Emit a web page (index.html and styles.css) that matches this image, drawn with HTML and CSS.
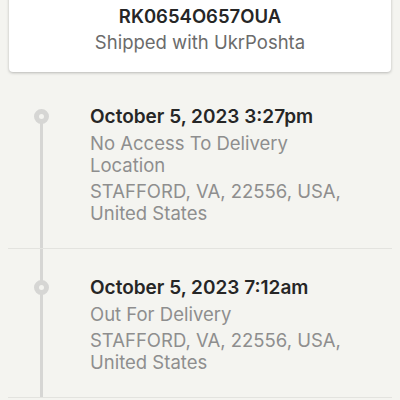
FILE: index.html
```html
<!DOCTYPE html>
<html lang="en">
<head>
    <meta charset="UTF-8">
    <meta name="viewport" content="width=device-width, initial-scale=1.0">
    <title>Tracking</title>
    <link rel="stylesheet" href="styles.css">
</head>
<body>
    <!-- 运单卡片 -->
    <div class="card">
        <p class="card_num">RK0654O657OUA</p>
        <p class="card_via">Shipped with UkrPoshta</p>
    </div>

    <!-- 物流记录 -->
    <ul class="track">
        <li class="first">
            <div class="rail"><span class="dot"></span></div>
            <div class="info">
                <p class="date">October 5, 2023 3:27pm</p>
                <p class="status">No Access To Delivery Location</p>
                <p class="place">STAFFORD, VA, 22556, USA, United States</p>
            </div>
        </li>
        <li>
            <div class="rail"><span class="dot"></span></div>
            <div class="info">
                <p class="date">October 5, 2023 7:12am</p>
                <p class="status">Out For Delivery</p>
                <p class="place">STAFFORD, VA, 22556, USA, United States</p>
            </div>
        </li>
    </ul>
</body>
</html>
```

FILE: styles.css
```css
*{
    margin: 0;
    padding: 0;
}
li{
    list-style: none;
}
body{
    background: #f4f4f0;
    font-family: Inter, "Open Sans", sans-serif;
    overflow: hidden;
}
.card{
    margin: -20px 9px 0;
    padding: 25px 0 17px;
    background: #fff;
    border-radius: 4px;
    box-shadow: 0 1px 3px rgba(0,0,0,.25);
    text-align: center;
}
.card .card_num{
    font-size: 18.5px;
    font-weight: 600;
    line-height: 22px;
    color: #262626;
}
.card .card_via{
    margin-top: 2px;
    font-size: 18.5px;
    line-height: 26px;
    color: #6b6b6b;
}
.track{
    margin: 6px 8px 0;
}
.track li{
    display: flex;
    border-bottom: 1px solid #e3e3df;
}
.track .rail{
    width: 82px;
    flex-shrink: 0;
    /* 竖线 */
    background: linear-gradient(#d6d6d4, #d6d6d4) no-repeat 32px 0 / 3px 100%;
}
.track li.first .rail{
    background-position: 32px 38px;
}
.track .dot{
    display: block;
    width: 5px;
    height: 5px;
    margin: 31px 0 0 26px;
    border: 5px solid #d6d6d4;
    border-radius: 50%;
    background: #f4f4f0;
}
.track .info{
    width: 262px;
    padding: 28px 0 24px;
    font-size: 18.5px;
    line-height: 22px;
}
.track .date{
    font-size: 19px;
    font-weight: 600;
    color: #262626;
}
.track .status,
.track .place{
    margin-top: 4px;
    color: #8e8e8e;
}
```
